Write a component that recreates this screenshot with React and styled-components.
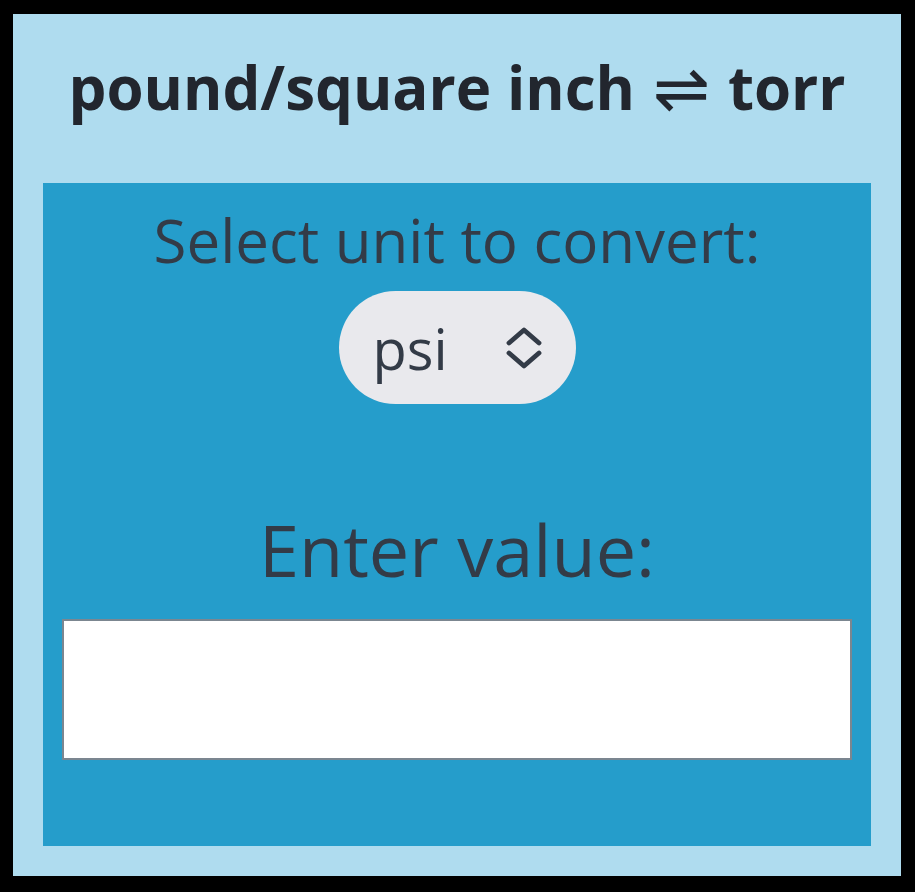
import React, { useState } from 'react'
import styled, { createGlobalStyle } from 'styled-components'

const GlobalStyle = createGlobalStyle`
    html, body {
        margin: 0;
        padding: 0;
        background: #000;
    }
    body {
        font-family: "Open Sans", "Noto Sans", sans-serif;
    }
`;

const Page = styled.div`
    width: 915px;
    height: 892px;
    background: #000;
    padding: 14px 14px 16px 13px;
    box-sizing: border-box;
`;

const Card = styled.div`
    height: 100%;
    background: #afdcef;
    padding: 0 30px 30px;
    box-sizing: border-box;
    display: flex;
    flex-direction: column;
`;

const Title = styled.h1`
    margin: 0;
    height: 169px;
    display: flex;
    align-items: center;
    justify-content: center;
    font-size: 60px;
    font-weight: 700;
    color: #22262e;
    padding-bottom: 24px;
    box-sizing: border-box;
    white-space: nowrap;
`;

const Swap = styled.span`
    font-family: "DejaVu Sans", sans-serif;
    font-weight: 400;
    font-size: 68px;
    line-height: 1;
    margin: 0 18px 0 18px;
    position: relative;
    top: 2px;
`;

const Panel = styled.div`
    flex: 1;
    background: #259dcb;
    display: flex;
    flex-direction: column;
    align-items: center;
    padding: 18px 19px 0;
`;

const Label = styled.label`
    color: #333b47;
    font-size: ${props => props.size}px;
    line-height: 1.3;
    margin-bottom: ${props => props.gap}px;
    white-space: nowrap;
`;

const SelectWrap = styled.div`
    width: 237px;
    height: 113px;
    border-radius: 57px;
    background: #e9e9ed;
    display: flex;
    align-items: center;
    justify-content: space-between;
    padding: 0 28px 0 34px;
    box-sizing: border-box;
    color: #333b47;
    font-size: 56px;
    margin-bottom: 99px;
`;

const Input = styled.input`
    width: 100%;
    height: 141px;
    box-sizing: border-box;
    border: 2px solid #7b8690;
    background: #fff;
    font-size: 40px;
    font-family: inherit;
`;

const Chevrons = () => (
    <svg width="48" height="48" viewBox="0 0 24 24" fill="none" stroke="#333b47" strokeWidth="2.4" strokeLinecap="round" strokeLinejoin="round">
        <path d="M4.5 9.5l7.5-6.5 7.5 6.5" />
        <path d="M4.5 14.5l7.5 6.5 7.5-6.5" />
    </svg>
)

const App = () => {
    const [value, setValue] = useState('')
    return (
        <>
            <GlobalStyle />
            <Page>
                <Card>
                    <Title>pound/square inch<Swap>⇌</Swap>torr</Title>
                    <Panel>
                        <Label size={60} gap={12}>Select unit to convert:</Label>
                        <SelectWrap>
                            <span>psi</span>
                            <Chevrons />
                        </SelectWrap>
                        <Label size={72} gap={22}>Enter value:</Label>
                        <Input value={value} onChange={e => setValue(e.target.value)} />
                    </Panel>
                </Card>
            </Page>
        </>
    )
}

export default App
